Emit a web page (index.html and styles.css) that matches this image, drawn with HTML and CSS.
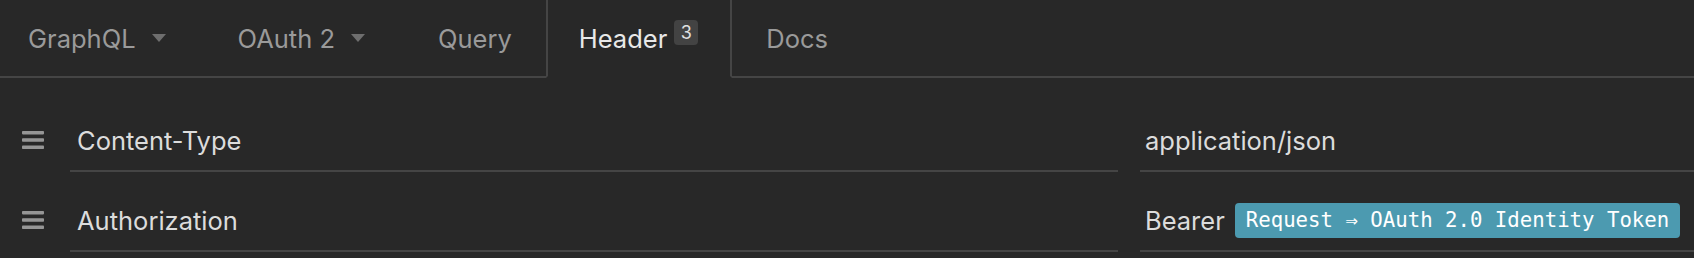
FILE: index.html
```html
<!DOCTYPE html>
<html>
<head>
<meta charset="utf-8">
<link rel="stylesheet" href="styles.css">
</head>
<body>
<div class="tabs">
  <div class="tab dd first">GraphQL<span class="caret"></span></div>
  <div class="tab dd">OAuth 2<span class="caret"></span></div>
  <div class="tab">Query</div>
  <div class="tab active">Header<span class="count">3</span></div>
  <div class="tab">Docs</div>
  <div class="tab-fill"></div>
</div>
<div class="pairs">
  <div class="pair">
    <div class="handle">
      <svg width="22" height="18" viewBox="0 0 22 18"><rect x="0" y="0" width="22" height="3.4" rx="0.8" fill="#969696"/><rect x="0" y="7.3" width="22" height="3.4" rx="0.8" fill="#969696"/><rect x="0" y="14.6" width="22" height="3.4" rx="0.8" fill="#969696"/></svg>
    </div>
    <div class="field key">Content-Type</div>
    <div class="field value">application/json</div>
  </div>
  <div class="pair">
    <div class="handle">
      <svg width="22" height="18" viewBox="0 0 22 18"><rect x="0" y="0" width="22" height="3.4" rx="0.8" fill="#969696"/><rect x="0" y="7.3" width="22" height="3.4" rx="0.8" fill="#969696"/><rect x="0" y="14.6" width="22" height="3.4" rx="0.8" fill="#969696"/></svg>
    </div>
    <div class="field key">Authorization</div>
    <div class="field value">Bearer <span class="tag">Request ⇒ OAuth 2.0 Identity Token</span></div>
  </div>
</div>
</body>
</html>
```
FILE: styles.css
```css
html, body {
  margin: 0;
  padding: 0;
  background: #282828;
}
body {
  font-family: Inter, "Noto Sans", "Liberation Sans", sans-serif;
  font-size: 25.5px;
  color: #dcdcdc;
  width: 1694px;
  height: 258px;
  overflow: hidden;
}
.tabs {
  display: flex;
  height: 78px;
}
.tab {
  box-sizing: border-box;
  height: 78px;
  display: flex;
  align-items: center;
  padding: 0 34px;
  color: #9a9a9a;
  border-bottom: 2px solid #454545;
  white-space: nowrap;
}
.tab.dd {
  padding-right: 39px;
  padding-left: 33px;
}
.tab.first {
  padding-left: 28px;
}
.caret {
  width: 0;
  height: 0;
  margin-left: 16px;
  border-left: 7.5px solid transparent;
  border-right: 7.5px solid transparent;
  border-top: 8px solid #6e6e6e;
}
.tab.active {
  color: #e8e8e8;
  border-bottom-color: transparent;
  border-left: 2px solid #454545;
  border-right: 2px solid #454545;
  padding-left: 31px;
  padding-right: 32px;
}
.count {
  align-self: flex-start;
  margin-top: 20px;
  margin-left: 7px;
  width: 24px;
  height: 25px;
  box-sizing: border-box;
  background: #434343;
  border-radius: 4px;
  font-size: 18px;
  line-height: 25px;
  text-align: center;
  color: #e0e0e0;
}
.tab-fill {
  flex: 1;
  border-bottom: 2px solid #454545;
}
.pairs {
  padding-top: 14px;
}
.pair {
  display: grid;
  grid-template-columns: 48px 1fr 554px;
  column-gap: 22px;
  padding-top: 18px;
  height: 62px;
}
.handle {
  display: flex;
  align-items: center;
  padding-left: 22px;
  padding-bottom: 2px;
}
.handle svg {
  display: block;
}
.field {
  box-sizing: border-box;
  height: 62px;
  border-bottom: 2px solid #454545;
  display: flex;
  align-items: center;
  white-space: nowrap;
}
.key {
  padding-left: 7px;
}
.value {
  padding-left: 5px;
}
.tag {
  display: inline-flex;
  align-items: center;
  height: 35px;
  margin-left: 10px;
  padding: 0 11px;
  background: #4c9ab0;
  border-radius: 4px;
  color: #ffffff;
  font-family: "DejaVu Sans Mono", "Liberation Mono", monospace;
  font-size: 20.7px;
}
```
